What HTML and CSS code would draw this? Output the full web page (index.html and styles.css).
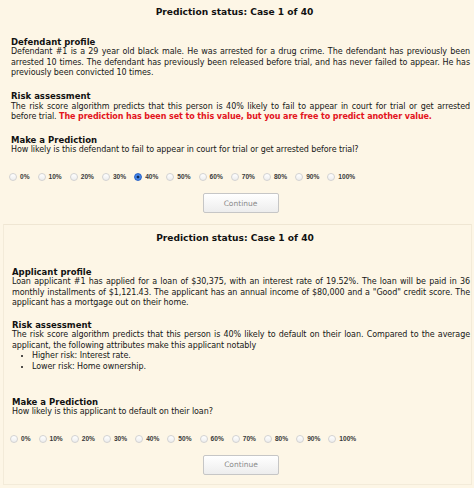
FILE: index.html
```html
<!DOCTYPE html>
<html lang="en">
<head>
<meta charset="utf-8">
<title>Prediction status</title>
<link rel="stylesheet" href="styles.css">
</head>
<body>
<div class="page">
  <section class="panel panel-first">
    <h1 class="title">Prediction status: Case 1 of 40</h1>
    <div class="block">
      <h2 class="label">Defendant profile</h2>
      <p class="text">Defendant #1 is a 29 year old black male. He was arrested for a drug crime. The defendant has previously been arrested 10 times. The defendant has previously been released before trial, and has never failed to appear. He has previously been convicted 10 times.</p>
    </div>
    <div class="block">
      <h2 class="label">Risk assessment</h2>
      <p class="text">The risk score algorithm predicts that this person is 40% likely to fail to appear in court for trial or get arrested before trial. <strong class="warn">The prediction has been set to this value, but you are free to predict another value.</strong></p>
    </div>
    <div class="block">
      <h2 class="label">Make a Prediction</h2>
      <p class="text">How likely is this defendant to fail to appear in court for trial or get arrested before trial?</p>
    </div>
    <div class="choices">
      <label class="choice"><span class="radio"></span>0%</label>
      <label class="choice"><span class="radio"></span>10%</label>
      <label class="choice"><span class="radio"></span>20%</label>
      <label class="choice"><span class="radio"></span>30%</label>
      <label class="choice"><span class="radio checked"></span>40%</label>
      <label class="choice"><span class="radio"></span>50%</label>
      <label class="choice"><span class="radio"></span>60%</label>
      <label class="choice"><span class="radio"></span>70%</label>
      <label class="choice"><span class="radio"></span>80%</label>
      <label class="choice"><span class="radio"></span>90%</label>
      <label class="choice"><span class="radio"></span>100%</label>
    </div>
    <div class="actions"><button class="btn" type="button">Continue</button></div>
  </section>

  <section class="panel panel-second">
    <h1 class="title">Prediction status: Case 1 of 40</h1>
    <div class="block">
      <h2 class="label">Applicant profile</h2>
      <p class="text">Loan applicant #1 has applied for a loan of $30,375, with an interest rate of 19.52%. The loan will be paid in 36 monthly installments of $1,121.43. The applicant has an annual income of $80,000 and a "Good" credit score. The applicant has a mortgage out on their home.</p>
    </div>
    <div class="block">
      <h2 class="label">Risk assessment</h2>
      <p class="text">The risk score algorithm predicts that this person is 40% likely to default on their loan. Compared to the average applicant, the following attributes make this applicant notably</p>
      <ul class="list">
        <li>Higher risk: Interest rate.</li>
        <li>Lower risk: Home ownership.</li>
      </ul>
    </div>
    <div class="block block-wide">
      <h2 class="label">Make a Prediction</h2>
      <p class="text">How likely is this applicant to default on their loan?</p>
    </div>
    <div class="choices">
      <label class="choice"><span class="radio"></span>0%</label>
      <label class="choice"><span class="radio"></span>10%</label>
      <label class="choice"><span class="radio"></span>20%</label>
      <label class="choice"><span class="radio"></span>30%</label>
      <label class="choice"><span class="radio"></span>40%</label>
      <label class="choice"><span class="radio"></span>50%</label>
      <label class="choice"><span class="radio"></span>60%</label>
      <label class="choice"><span class="radio"></span>70%</label>
      <label class="choice"><span class="radio"></span>80%</label>
      <label class="choice"><span class="radio"></span>90%</label>
      <label class="choice"><span class="radio"></span>100%</label>
    </div>
    <div class="actions"><button class="btn" type="button">Continue</button></div>
  </section>
</div>
</body>
</html>
```

FILE: styles.css
```css
html, body {
  margin: 0;
  padding: 0;
  background: #fdf6e6;
}

body {
  font-family: "DejaVu Sans", "Lucida Grande", sans-serif;
  font-size: 8px;
  line-height: 10.6px;
  color: #161616;
  width: 474px;
  height: 488px;
  overflow: hidden;
}

.page {
  display: flex;
  flex-direction: column;
}

.panel {
  background: #fdf6e6;
  display: flex;
  flex-direction: column;
  box-sizing: border-box;
}

.panel-first {
  height: 224px;
  padding: 5px 4px 0 11px;
}

.panel-second {
  margin: 0 2px 0 3px;
  height: 261px;
  padding: 6px 1px 0 8px;
  border: 1px solid #f3ebd9;
  border-top-color: #efe6d3;
}

.title {
  margin: 0;
  padding-right: 12px;
  font-size: 9.1px;
  line-height: 14px;
  font-weight: bold;
  text-align: center;
  color: #111;
}

.block {
  margin-top: 12px;
}

.panel-first .block:first-of-type {
  margin-top: 17.7px;
}

.panel-second .block {
  margin-top: 10.6px;
}

.panel-second .block:first-of-type {
  margin-top: 21.7px;
}

.panel-second .block-wide {
  margin-top: 24px;
}

.label {
  margin: 0;
  font-size: 8.5px;
  line-height: 10.6px;
  font-weight: bold;
  color: #111;
}

.text {
  margin: 0;
  text-align: justify;
  letter-spacing: -0.08px;
}

.warn {
  color: #e3141c;
}

.list {
  margin: 0;
  padding-left: 20px;
  letter-spacing: -0.08px;
}

.choices {
  display: flex;
  align-items: center;
  margin-top: 16px;
  margin-left: -2px;
  height: 10px;
}

.choice {
  display: flex;
  align-items: center;
  font-family: "Liberation Sans", Arial, sans-serif;
  font-size: 6.6px;
  font-weight: bold;
  color: #3a3a3a;
  margin-right: 8px;
}

.radio {
  width: 8px;
  height: 8px;
  border-radius: 50%;
  border: 0.5px solid #d2d2d2;
  background: linear-gradient(#ffffff, #ededed);
  margin-right: 3px;
  box-sizing: border-box;
}

.radio.checked {
  border-color: #2a64c9;
  background: radial-gradient(circle, #0d2a5a 0 1.3px, #4e8ff0 1.7px, #2a6fe0 100%);
}

.actions {
  display: flex;
  justify-content: center;
  margin-top: 11px;
}

.btn {
  width: 76px;
  height: 20px;
  padding: 0;
  font-family: "DejaVu Sans", sans-serif;
  font-size: 7.5px;
  color: #8a8a8a;
  background: linear-gradient(#ffffff, #ededed);
  border: 1px solid #c6c6c6;
  border-radius: 2px;
}
```
